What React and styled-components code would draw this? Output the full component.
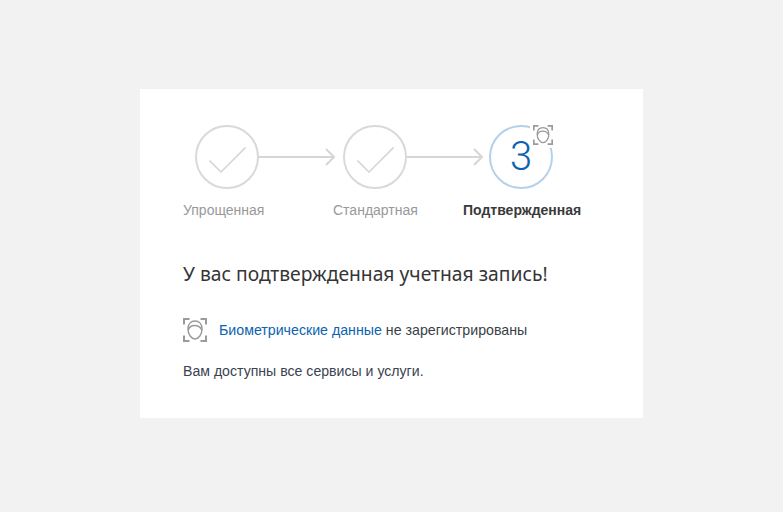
import styled, { createGlobalStyle } from "styled-components";

const GlobalStyle = createGlobalStyle`
	html, body {
		margin: 0;
		padding: 0;
		background: #f2f2f2;
	}
`;

export default function App() {
	return (
		<>
			<GlobalStyle />
			<Page>
				<Card>
					<Stepper>
						<Circle>
							<CheckIcon />
						</Circle>
						<Connector />
						<Circle>
							<CheckIcon />
						</Circle>
						<Connector $short />
						<Circle $active>
							<StepNumber>3</StepNumber>
							<BadgeBox>
								<FaceIcon size={20} />
							</BadgeBox>
						</Circle>
					</Stepper>
					<Labels>
						<Label $width="150px">Упрощенная</Label>
						<Label $width="130px">Стандартная</Label>
						<Label $width="130px" $active>
							Подтвержденная
						</Label>
					</Labels>
					<Title>У вас подтвержденная учетная запись!</Title>
					<BioRow>
						<FaceIcon size={24} />
						<BioText>
							<BioLink href="#">Биометрические данные</BioLink> не зарегистрированы
						</BioText>
					</BioRow>
					<Note>Вам доступны все сервисы и услуги.</Note>
				</Card>
			</Page>
		</>
	);
}

function CheckIcon() {
	return (
		<CheckSvg width="37" height="26" viewBox="0 0 37 26" fill="none">
			<path d="M0.5 13.5 L12 25 L36.5 0.5" stroke="#d6d6d6" strokeWidth="1.6" />
		</CheckSvg>
	);
}

function Connector({ $short }) {
	return (
		<ConnectorBox $short={$short}>
			<svg width="100%" height="18" viewBox="0 0 84 18" preserveAspectRatio="xMinYMid slice" fill="none">
				<path d="M0 9 H75 M67 1 L75 9 L67 17" stroke="#d6d6d6" strokeWidth="2" />
			</svg>
		</ConnectorBox>
	);
}

function FaceIcon({ size }) {
	return (
		<svg width={size} height={size} viewBox="0 0 24 24" fill="none" stroke="#9a9a9a" strokeWidth="1.5">
			<path d="M1 6.5 V1 H6.5 M17.5 1 H23 V6.5 M23 17.5 V23 H17.5 M6.5 23 H1 V17.5" strokeWidth="2" />
			<path d="M5 11 C5 6 7.8 3 12 3 C16.2 3 19 6 19 11 C19 16.5 15.5 21 12 21 C8.5 21 5 16.5 5 11 Z" />
			<path d="M5.2 12 C6.2 9.2 8.2 7.4 11.5 7.4 C15 7.4 17.6 9 18.8 12" />
		</svg>
	);
}

const Page = styled.div`
	width: 783px;
	height: 512px;
	padding-top: 89px;
	box-sizing: border-box;
`;

const Card = styled.div`
	width: 503px;
	height: 329px;
	margin-left: 140px;
	padding: 36px 0 0 43px;
	box-sizing: border-box;
	background: #fff;
	font-family: "Liberation Sans", Arial, sans-serif;
`;

const Stepper = styled.div`
	display: flex;
	align-items: center;
	margin-left: 12px;
`;

const Circle = styled.div`
	position: relative;
	display: flex;
	align-items: center;
	justify-content: center;
	width: 64px;
	height: 64px;
	flex-shrink: 0;
	box-sizing: border-box;
	border-radius: 50%;
	border: 2px solid ${(props) => (props.$active ? "#b5d0e8" : "#d9d9d9")};
`;

const CheckSvg = styled.svg`
	margin-top: 5px;
`;

const ConnectorBox = styled.div`
	display: flex;
	width: ${(props) => (props.$short ? "82px" : "84px")};
`;

const StepNumber = styled.span`
	font-family: Roboto, sans-serif;
	font-size: 40px;
	line-height: 1;
	font-weight: 300;
	color: #0b63ae;
`;

const BadgeBox = styled.div`
	position: absolute;
	top: -5px;
	right: -5px;
	display: flex;
	padding: 3px;
	background: #fff;
`;

const Labels = styled.div`
	display: flex;
	margin-top: 12px;
`;

const Label = styled.div`
	width: ${(props) => props.$width};
	font-size: 14px;
	line-height: 18px;
	font-weight: ${(props) => (props.$active ? 700 : 400)};
	color: ${(props) => (props.$active ? "#3a3a3a" : "#999")};
`;

const Title = styled.h1`
	margin: 41px 0 0;
	font-family: "Noto Sans", sans-serif;
	font-size: 19.27px;
	line-height: 28px;
	font-weight: 400;
	color: #353535;
`;

const BioRow = styled.div`
	display: flex;
	align-items: center;
	gap: 12px;
	margin-top: 30px;
`;

const BioText = styled.div`
	font-size: 14.2px;
	line-height: 20px;
	color: #3a3f45;
`;

const BioLink = styled.a`
	color: #0b63ae;
	text-decoration: none;
`;

const Note = styled.p`
	margin: 19px 0 0;
	font-size: 14.12px;
	line-height: 20px;
	color: #3a4350;
`;
